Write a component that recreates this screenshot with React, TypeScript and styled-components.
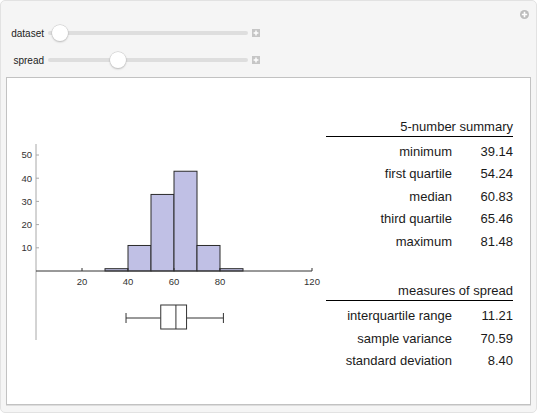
import * as React from "react";
import styled, { createGlobalStyle } from "styled-components";

const GlobalStyle = createGlobalStyle`
  html, body {
    margin: 0;
    padding: 0;
    background: #ffffff;
  }
  body {
    font-family: "Liberation Sans", Arial, sans-serif;
  }
`;

const Panel = styled.div`
  position: relative;
  width: 537px;
  height: 413px;
  box-sizing: border-box;
  background: #f5f5f5;
  border: 1px solid #e2e2e2;
  border-radius: 5px;
  display: flex;
  flex-direction: column;
`;

const CornerButton = styled.div`
  position: absolute;
  top: 9px;
  right: 7px;
  width: 9px;
  height: 9px;
  border-radius: 50%;
  background: #bcbcbc;
  display: flex;
  align-items: center;
  justify-content: center;
`;

const Controls = styled.div`
  display: grid;
  grid-template-columns: 43px 200px 8px;
  grid-auto-rows: 26px;
  column-gap: 4px;
  row-gap: 1px;
  align-items: center;
  padding-top: 19px;
`;

const Label = styled.span`
  font-size: 10px;
  color: #222;
  text-align: right;
`;

const Track = styled.div`
  position: relative;
  height: 4px;
  border-radius: 2px;
  background: #dedede;
`;

const Thumb = styled.div`
  position: absolute;
  top: 50%;
  width: 16px;
  height: 16px;
  margin: -8px 0 0 -8px;
  border-radius: 50%;
  background: #ffffff;
  box-shadow: 0 0 0 0.5px #c8c8c8, 0 1px 2px rgba(0, 0, 0, 0.25);
`;

const PlusBox = styled.div`
  width: 8px;
  height: 8px;
  background: #c6c6c6;
  display: flex;
  align-items: center;
  justify-content: center;
`;

const Content = styled.div`
  margin: 4px 5px 7px 5px;
  flex: 1;
  background: #ffffff;
  border: 1px solid #c2c2c2;
  box-shadow: 0 1px 0 #dddddd;
  display: flex;
  flex-direction: row;
`;

const Chart = styled.svg`
  flex: none;
  display: block;
`;

const Tables = styled.div`
  width: 187px;
  padding-top: 40px;
  display: flex;
  flex-direction: column;
  gap: 30px;
`;

const Table = styled.div`
  display: grid;
  grid-template-columns: 126px 61px;
  grid-auto-rows: 22.4px;
  align-items: center;
  font-size: 13px;
  color: #1a1a1a;
`;

const TableTitle = styled.div`
  grid-column: 1 / span 2;
  align-self: start;
  height: 18px;
  line-height: 18px;
  text-align: right;
  border-bottom: 1px solid #000;
`;

const Cell = styled.div`
  text-align: right;
`;

const Plus = ({ size }: { size: number }) => (
  <svg width={size} height={size} viewBox="0 0 10 10">
    <path d="M5 2v6M2 5h6" stroke="#fff" strokeWidth="1.8" />
  </svg>
);

function Slider({ label, value }: { label: string; value: number }) {
  return (
    <>
      <Label>{label}</Label>
      <Track>
        <Thumb style={{ left: `${value * 100}%` }} />
      </Track>
      <PlusBox>
        <Plus size={8} />
      </PlusBox>
    </>
  );
}

const X0 = 36;
const Y0 = 271;
const sx = (v: number) => X0 + 2.3 * v;
const sy = (v: number) => Y0 - 2.32 * v;

const bins = [
  { from: 30, count: 1 },
  { from: 40, count: 11 },
  { from: 50, count: 33 },
  { from: 60, count: 43 },
  { from: 70, count: 11 },
  { from: 80, count: 1 },
];

const five = { min: 39.14, q1: 54.24, med: 60.83, q3: 65.46, max: 81.48 };

function Histogram() {
  const font = { fontFamily: "Liberation Sans, Arial, sans-serif", fontSize: 9.5, fill: "#333" };
  const bTop = 305;
  const bBot = 329;
  const mid = 318;
  return (
    <Chart width={319} height={326} viewBox="7 78 319 326">
      <line x1={X0} y1={144} x2={X0} y2={340} stroke="#a8a8a8" strokeWidth="1" />
      {[10, 20, 30, 40, 50].map((v) => (
        <g key={v}>
          <line x1={X0} y1={sy(v)} x2={X0 + 3} y2={sy(v)} stroke="#a8a8a8" />
          <text x={X0 - 4} y={sy(v) + 3.4} textAnchor="end" {...font}>
            {v}
          </text>
        </g>
      ))}
      {bins.map((b) => (
        <rect
          key={b.from}
          x={sx(b.from)}
          y={sy(b.count)}
          width={23}
          height={Y0 - sy(b.count)}
          fill="#c0c0e5"
          stroke="#2a2a2a"
          strokeWidth="1"
        />
      ))}
      <line x1={X0} y1={Y0} x2={312} y2={Y0} stroke="#333" strokeWidth="1" />
      {[20, 40, 60, 80, 120].map((v) => (
        <g key={v}>
          <line x1={sx(v)} y1={Y0} x2={sx(v)} y2={Y0 - 3} stroke="#333" />
          <text x={sx(v)} y={284.5} textAnchor="middle" {...font}>
            {v}
          </text>
        </g>
      ))}
      <g stroke="#333" strokeWidth="1" fill="#fff">
        <line x1={sx(five.min)} y1={mid} x2={sx(five.q1)} y2={mid} />
        <line x1={sx(five.q3)} y1={mid} x2={sx(five.max)} y2={mid} />
        <line x1={sx(five.min)} y1={313} x2={sx(five.min)} y2={323} />
        <line x1={sx(five.max)} y1={313} x2={sx(five.max)} y2={323} />
        <rect x={sx(five.q1)} y={bTop} width={sx(five.q3) - sx(five.q1)} height={bBot - bTop} />
        <line x1={sx(five.med)} y1={bTop} x2={sx(five.med)} y2={bBot} />
      </g>
    </Chart>
  );
}

const summary: [string, string][] = [
  ["minimum", "39.14"],
  ["first quartile", "54.24"],
  ["median", "60.83"],
  ["third quartile", "65.46"],
  ["maximum", "81.48"],
];

const spread: [string, string][] = [
  ["interquartile range", "11.21"],
  ["sample variance", "70.59"],
  ["standard deviation", "8.40"],
];

function StatTable({ title, rows }: { title: string; rows: [string, string][] }) {
  return (
    <Table>
      <TableTitle>{title}</TableTitle>
      {rows.map(([k, v]) => (
        <React.Fragment key={k}>
          <Cell>{k}</Cell>
          <Cell>{v}</Cell>
        </React.Fragment>
      ))}
    </Table>
  );
}

export default function App() {
  return (
    <>
      <GlobalStyle />
      <Panel>
        <CornerButton>
          <Plus size={9} />
        </CornerButton>
        <Controls>
          <Slider label="dataset" value={0.06} />
          <Slider label="spread" value={0.35} />
        </Controls>
        <Content>
          <Histogram />
          <Tables>
            <StatTable title="5-number summary" rows={summary} />
            <StatTable title="measures of spread" rows={spread} />
          </Tables>
        </Content>
      </Panel>
    </>
  );
}
